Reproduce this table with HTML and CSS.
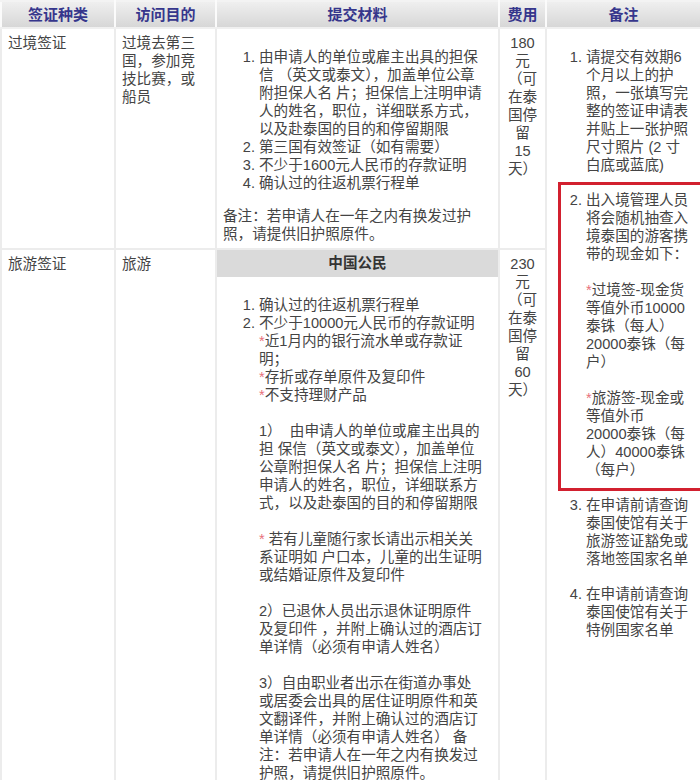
FILE: index.html
```html
<!DOCTYPE html>
<html lang="zh-CN">
<head>
<meta charset="utf-8">
<title>泰国签证</title>
<link rel="stylesheet" href="styles.css">
</head>
<body>
<table class="visa">
  <colgroup>
    <col class="c-type">
    <col class="c-purpose">
    <col class="c-docs">
    <col class="c-fee">
    <col class="c-note">
  </colgroup>
  <thead>
    <tr>
      <th>签证种类</th>
      <th>访问目的</th>
      <th>提交材料</th>
      <th>费用</th>
      <th>备注</th>
    </tr>
  </thead>
  <tbody>
    <tr>
      <td>过境签证</td>
      <td>过境去第三<br>国，参加竞<br>技比赛，或<br>船员</td>
      <td class="docs">
        <ol class="list">
          <li>由申请人的单位或雇主出具的担保<br>信 （英文或泰文），加盖单位公章<br>附担保人名 片；担保信上注明申请<br>人的姓名，职位，详细联系方式，<br>以及赴泰国的目的和停留期限</li>
          <li>第三国有效签证（如有需要）</li>
          <li>不少于1600元人民币的存款证明</li>
          <li>确认过的往返机票行程单</li>
        </ol>
        备注：若申请人在一年之内有换发过护<br>照，请提供旧护照原件。
      </td>
      <td class="fee">180<br>元<br>（可<br>在泰<br>国停<br>留<br>15<br>天）</td>
      <td class="note" rowspan="2">
        <ol class="list notes">
          <li>请提交有效期6<br>个月以上的护<br>照，一张填写完<br>整的签证申请表<br>并贴上一张护照<br>尺寸照片 (2 寸<br>白底或蓝底)</li>
          <li class="mark">出入境管理人员<br>将会随机抽查入<br>境泰国的游客携<br>带的现金如下：<br><br><span class="star">*</span>过境签-现金货<br>等值外币10000<br>泰铢（每人）<br>20000泰铢（每<br>户）<br><br><span class="star">*</span>旅游签-现金或<br>等值外币<br>20000泰铢（每<br>人）40000泰铢<br>（每户）</li>
          <li>在申请前请查询<br>泰国使馆有关于<br>旅游签证豁免或<br>落地签国家名单</li>
          <li>在申请前请查询<br>泰国使馆有关于<br>特例国家名单</li>
        </ol>
      </td>
    </tr>
    <tr>
      <td>旅游签证</td>
      <td>旅游</td>
      <td class="docs nested">
        <div class="sub-head">中国公民</div>
        <div class="sub-body">
          <ol class="list">
            <li>确认过的往返机票行程单</li>
            <li>不少于10000元人民币的存款证明<br><span class="star">*</span>近1月内的银行流水单或存款证<br>明；<br><span class="star">*</span>存折或存单原件及复印件<br><span class="star">*</span>不支持理财产品<br><br>1）&nbsp; 由申请人的单位或雇主出具的<br>担 保信（英文或泰文），加盖单位<br>公章附担保人名 片；担保信上注明<br>申请人的姓名，职位，详细联系方<br>式，以及赴泰国的目的和停留期限<br><br><span class="star">*</span> 若有儿童随行家长请出示相关关<br>系证明如 户口本，儿童的出生证明<br>或结婚证原件及复印件<br><br>2）已退休人员出示退休证明原件<br>及复印件 ，并附上确认过的酒店订<br>单详情（必须有申请人姓名）<br><br>3）自由职业者出示在街道办事处<br>或居委会出具的居住证明原件和英<br>文翻译件，并附上确认过的酒店订<br>单详情（必须有申请人姓名） 备<br>注：若申请人在一年之内有换发过<br>护照，请提供旧护照原件。</li>
          </ol>
        </div>
      </td>
      <td class="fee">230<br>元<br>（可<br>在泰<br>国停<br>留<br>60<br>天）</td>
    </tr>
  </tbody>
</table>
</body>
</html>
```

FILE: styles.css
```css
html, body {
  margin: 0;
  padding: 0;
  background: #ffffff;
}

body {
  width: 700px;
  overflow: hidden;
  font-family: "Liberation Sans", "Noto Sans CJK SC", sans-serif;
  font-size: 14.6px;
  line-height: 18px;
  color: #444444;
}

.visa {
  width: 700px;
  table-layout: fixed;
  border-collapse: collapse;
}

.c-type { width: 114px; }
.c-purpose { width: 101px; }
.c-docs { width: 283px; }
.c-fee { width: 47px; }
.c-note { width: 155px; }

.visa th {
  height: 25px;
  padding: 0;
  border-top: 2px solid #f3f3f3;
  border-left: 2px solid #fbfbfb;
  border-right: 2px solid #fbfbfb;
  border-bottom: 2px solid #f0f0f0;
  background: linear-gradient(#efefef, #d7d7d7);
  color: #36368c;
  font-size: 15px;
  font-weight: bold;
  text-align: center;
  vertical-align: middle;
}

.visa td {
  padding: 5px 6px;
  border: 2px solid #ececec;
  vertical-align: top;
  text-align: left;
}

.visa td.docs {
  padding-right: 2px;
}

.visa td.nested {
  padding: 0;
}

.sub-head {
  height: 27px;
  line-height: 27px;
  background: #dadada;
  color: #333333;
  font-weight: bold;
  text-align: center;
}

.sub-body {
  padding: 5px 2px 5px 6px;
}

.visa td.fee {
  padding: 5px 2px;
  text-align: center;
}

.visa td.note {
  padding-right: 2px;
}

.list {
  margin: 14.4px 0;
  padding-left: 36px;
}

.notes {
  padding-left: 33px;
}

.notes li {
  margin-bottom: 17px;
}

.notes li.mark {
  position: relative;
}

/* red annotation frame drawn over the second note */
.notes li.mark::after {
  content: "";
  position: absolute;
  top: -9px;
  bottom: -12px;
  left: -28px;
  right: -8px;
  border: 3px solid #d2202f;
  pointer-events: none;
}

.star {
  color: #e8707c;
}
```
